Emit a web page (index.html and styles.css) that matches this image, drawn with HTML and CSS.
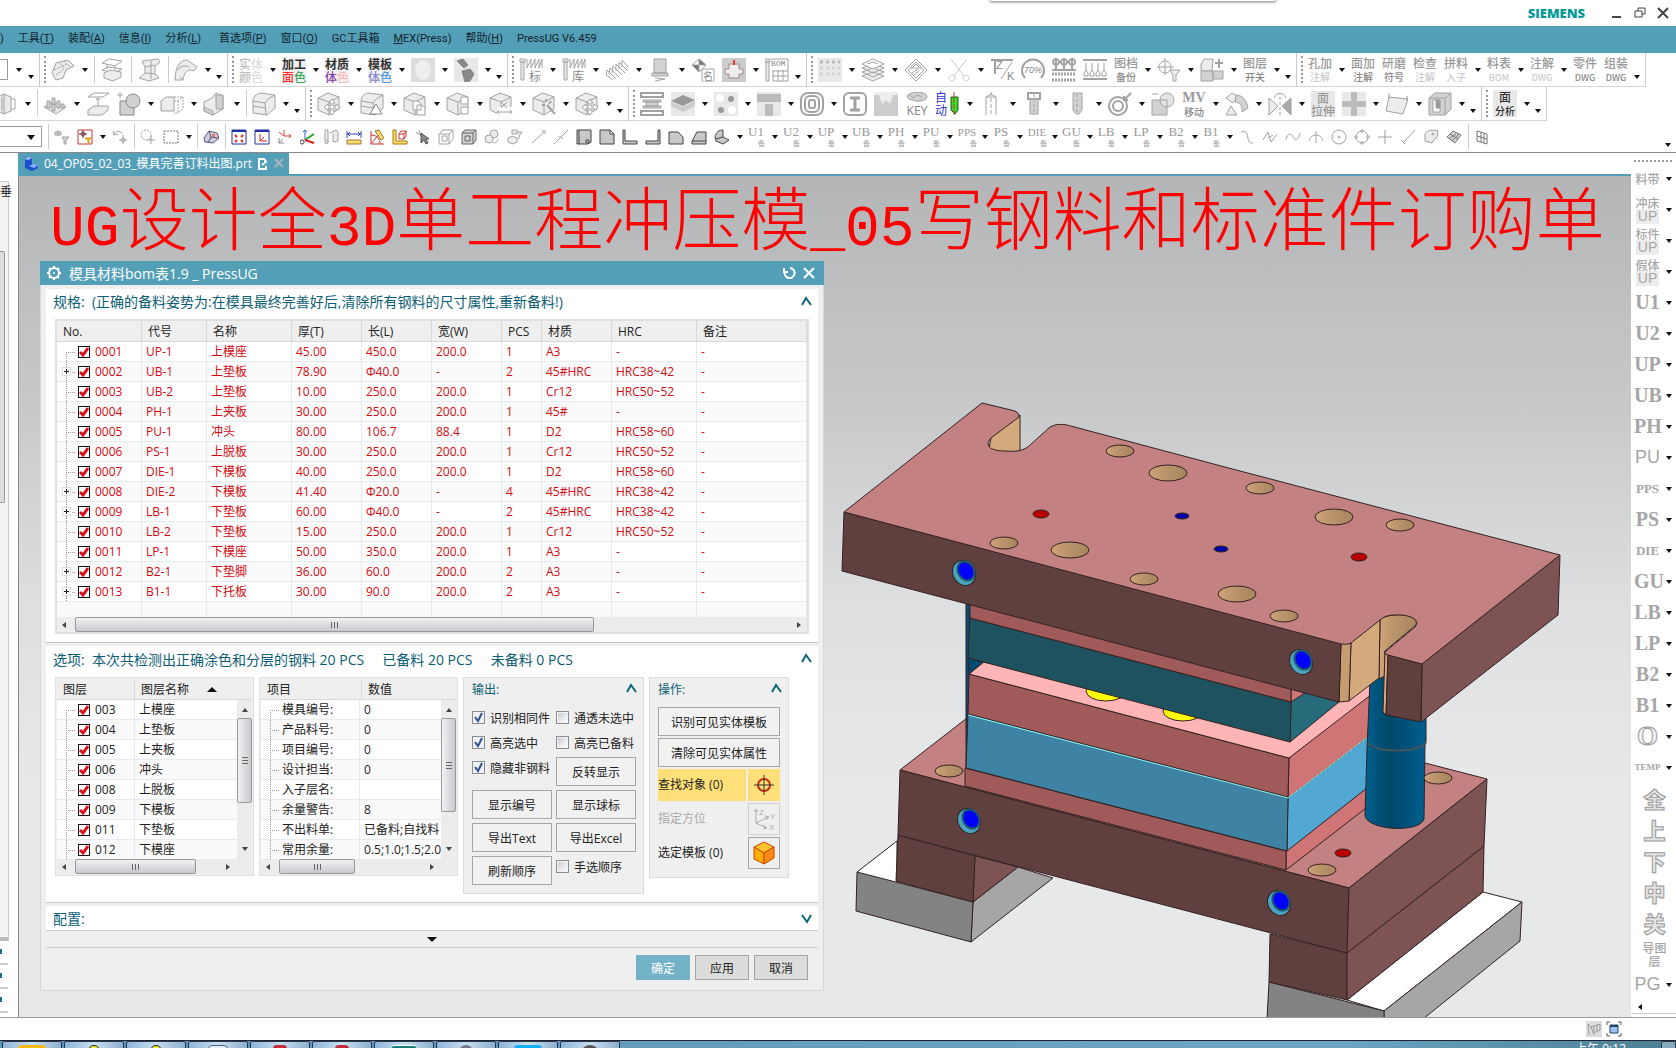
FILE: index.html
```
<!DOCTYPE html>
<html lang="zh-CN">
<head>
    <meta charset="UTF-8">
    <meta name="viewport" content="width=device-width, initial-scale=1.0">
    <title>04_OP05_02_03_模具完善订料出图.prt</title>
    <link rel="stylesheet" href="styles.css">
</head>
<body>

    <!-- icon sprite -->
    <svg class="sprite" width="0" height="0">
        <symbol id="sheet" viewBox="0 0 24 24"><path class="f" d="M1 15l4-10 12-3 6 6-8 4-3 8-7 2z"/><path d="M3 12l13-6M8 4l6 7M13 3l6 6M5 17l8-6" stroke-dasharray="2 1"/></symbol>
        <symbol id="swept" viewBox="0 0 24 24"><path d="M2 5l7-4 13 2-7 5zM2 12l6-3 14 2-8 4z"/><path class="f" d="M4 15l6-3 11 2v5l-8 4-9-3zM7 6v5M15 8v4"/></symbol>
        <symbol id="ruled" viewBox="0 0 24 24"><path class="f" d="M5 3l16-2 2 3-5 4v8l4 4-10 3-10-3 6-5V9z"/><path d="M8 9l10-2M8 15l10 1M14 3v18"/></symbol>
        <symbol id="bend" viewBox="0 0 24 24"><path class="f" d="M1 22C1 9 6 2 13 2l10 7-3 4c-7-3-10 2-11 9z"/><path d="M4 12c2-4 6-5 11-3M9 22l-3-3"/></symbol>
        <symbol id="blob" viewBox="0 0 24 24"><rect width="24" height="24" fill="#ddd" stroke="none"/><ellipse cx="12" cy="12" rx="8" ry="10" fill="#eee" stroke="none"/></symbol>
        <symbol id="hand" viewBox="0 0 24 24"><rect class="l" width="24" height="24"/><path d="M3 3l6-2 5 6-4 3zM8 13l8-2 4 5-4 7-5 1z" fill="#888" stroke="#888"/></symbol>
        <symbol id="stdpart" viewBox="0 0 24 24"><path class="f" d="M1 1h5v3H1zM2 4h3v18H2z"/><path d="M8 1v9l4-9v9l4-9v9l4-9v9l3-9v9"/></symbol>
        <symbol id="spring" viewBox="0 0 24 24"><path d="M1 17l7 5M2 12l9 9M5 10l9 9M8 8l9 9M11 6l9 9M14 4l9 9M17 2l6 7M1 17l1-5M4 16l1-6M7 15l1-7M11 13V6M14 11V4M17 9V2"/></symbol>
        <symbol id="punch" viewBox="0 0 24 24"><path class="g" d="M6 1h12v14H6zM4 15h16v3H4z"/><path d="M7 20l10 1-10 2"/></symbol>
        <symbol id="rename" viewBox="0 0 24 24"><path d="M8 1l7 6-7 7-7-7z"/><path d="M8 1l7 6H8zM8 14V7H1z" fill="#777"/><path fill="#fff" d="M11 11h12v12H11z"/></symbol>
        <symbol id="gift" viewBox="0 0 24 24"><rect width="24" height="24" fill="#ccc" stroke="none"/><path d="M7 6h10v5h4v5h-4v4H7v-4H3v-5h4z" fill="#eee" stroke="#a88"/><path d="M12 2v5M11 4h2" stroke="#e33" stroke-width="2"/></symbol>
        <symbol id="bom" viewBox="0 0 24 24"><path class="f" d="M0 1h5v3H0zM1 4h3v19H1z"/><path d="M6 1h17v22H8V12M8 13h15M8 18h15M13 12v11M18 12v11"/></symbol>
        <symbol id="plates" viewBox="0 0 24 24"><path class="l" d="M0 0h24v24H0z"/><path d="M2 4h20" stroke="#bbb" stroke-width="3" stroke-dasharray="3 3"/><path d="M2 10h20M2 16h20" stroke="#d4d4d4" stroke-width="3" stroke-dasharray="3 3"/></symbol>
        <symbol id="layers" viewBox="0 0 24 24"><path class="f" d="M1 18l11 5 11-5-11-4zM1 14l11 5 11-5-11-4zM1 10l11 5 11-5-11-4z"/><path fill="#fff" d="M1 6l11 5 11-5-11-5z"/><path d="M6 6l6-2 5 2"/></symbol>
        <symbol id="diamond" viewBox="0 0 24 24"><path d="M12 1l11 11-11 11L1 12zM12 4l8 8-8 8-8-8z"/><path d="M12 6l-5 5M12 6l5 5M9 10h6M8 15l6-4M10 17l5-4"/></symbol>
        <symbol id="cut" viewBox="0 0 24 24"><path stroke="#ccc" d="M4 1l13 17M20 1L7 18M5 17a3 3 0 1 0 .1 0zM19 17a3 3 0 1 0 .1 0z"/></symbol>
        <symbol id="zbar" viewBox="0 0 24 24"><path stroke-width="2" d="M1 2h22M5 2v14"/><path d="M22 4L11 21"/></symbol>
        <symbol id="dial" viewBox="0 0 24 24"><path stroke-width="2" d="M4 20a11 11 0 1 1 16 0"/></symbol>
        <symbol id="chain" viewBox="0 0 24 24"><path d="M4 1a3 3 0 1 0 .1 0zM12 1a3 3 0 1 0 .1 0zM20 1a3 3 0 1 0 .1 0zM4 0v12M12 0v12M20 0v12M0 12h24" stroke-width="2"/><path stroke-width="3" stroke-dasharray="2 1" d="M0 16h24M0 22h24"/></symbol>
        <symbol id="chain2" viewBox="0 0 24 24"><path d="M0 2h24M0 21h24" stroke-width="2"/><path d="M3 5v7l-2 3v3h4v-3l-2-3M9 5v7l-2 3v3h4v-3l-2-3M15 5v7l-2 3v3h4v-3l-2-3M21 5v7l-2 3v3h4v-3l-2-3"/></symbol>
        <symbol id="target" viewBox="0 0 24 24"><path d="M8 3a6 6 0 1 0 .1 0zM8 0v17M0 9h17"/><path class="f" d="M13 12h10l-4 5v6h-3v-6z"/></symbol>
        <symbol id="blocks" viewBox="0 0 24 24"><path class="f" d="M1 6l3-5h9l-1 12H1z"/><path class="g" d="M1 13h12v10H1zM13 13h10v8H13z"/><path d="M19 1v9M15 5h8" stroke-width="2"/></symbol>
        <symbol id="cyl" viewBox="0 0 24 24"><path class="f" d="M4 5l6-3 7 3v14l-7 3-6-3z"/><path d="M10 2v20M17 7h4v10h-4M8 5v14"/></symbol>
        <symbol id="pins" viewBox="0 0 24 24"><path class="f" d="M1 15l9-5 13 5-10 7z"/><path class="g" d="M4 9h3v7H4zM9 6h3v7H9zM9 12h3v7H9zM14 9h3v7h-3zM18 12h3v4h-3z"/></symbol>
        <symbol id="pad" viewBox="0 0 24 24"><path d="M2 5l6-4h15l-6 4zM12 6v9M10 8l2-2 2 2"/><path class="f" d="M2 18l6-4h14v4l-6 5H2z"/></symbol>
        <symbol id="unite" viewBox="0 0 24 24"><path class="g" stroke="#888" d="M3 9h14v14H3z"/><circle class="g" stroke="#888" cx="16" cy="9" r="7"/><path d="M3 0v6M0 3h6"/></symbol>
        <symbol id="trim" viewBox="0 0 24 24"><path class="f" d="M1 9l5-4h8v14H1z"/><path stroke-dasharray="2 1" d="M14 5h9v12l-5 4h-4M14 9h4l5-4M18 9v12"/></symbol>
        <symbol id="boss" viewBox="0 0 24 24"><path class="f" d="M1 10l8-4 4-5 7 3v13l-10 6-9-4z"/><path class="g" d="M13 3h7v14h-7zM1 15l9 4v4l-9-4z"/></symbol>
        <symbol id="edge" viewBox="0 0 24 24"><path class="f" d="M1 9c0-4 3-7 7-8l15 2v13l-8 7-14-2z"/><path d="M1 9l12 2c2-4 6-6 10-8M13 11l1 12M1 14l12 2"/></symbol>
        <symbol id="cube" viewBox="0 0 24 24"><path class="f" d="M1 6l10-5 11 4v12l-10 6-11-5z"/><path d="M1 6l11 4 10-5M12 10v13"/></symbol>
        <symbol id="a-move" viewBox="0 0 24 24"><path fill="#fff" d="M15 7l3 4h-2v3h3v-2l4 3-4 4v-3h-3v3h2l-3 4-3-4h2v-3h-3v3l-4-4 4-3v2h3v-3h-2z"/></symbol>
        <symbol id="a-tri" viewBox="0 0 24 24"><path fill="#fff" stroke="#888" d="M16 12l6 10H10z"/></symbol>
        <symbol id="a-doc" viewBox="0 0 24 24"><path fill="#fff" d="M10 9h5l3 3v6h-8zM14 13h5l3 3v7h-8z"/></symbol>
        <symbol id="a-two" viewBox="0 0 24 24"><path fill="#fff" d="M15 5h7v7h-7zM15 15h7v7h-7z"/></symbol>
        <symbol id="a-dim" viewBox="0 0 24 24"><path fill="#fff" stroke="none" d="M8 15h15v8H8z"/><path d="M12 10l6 6M18 10l-6 6M8 20h15M10 18l-2 2 2 2M21 18l2 2-2 2"/></symbol>
        <symbol id="a-wand" viewBox="0 0 24 24"><path stroke-width="2" d="M15 13l8 9M14 7v3M19 9l-2 3M10 13h3"/></symbol>
        <symbol id="die" viewBox="0 0 24 24"><path stroke-width="2" d="M1 1h22v4H1zM1 19h22v4H1z"/><path class="g" d="M3 8h18v2H3zM3 14h18v2H3zM6 10h12v4H6z"/></symbol>
        <symbol id="slab" viewBox="0 0 24 24"><path class="l" d="M0 0h24v24H0z"/><path d="M0 9l12-6 12 5-12 6z" fill="#999" stroke="none"/><path d="M0 10v4l12 6 12-6V9l-12 6z" fill="#ccc" stroke="none"/></symbol>
        <symbol id="holes" viewBox="0 0 24 24"><path class="l" d="M0 0h24v24H0z"/><g stroke="none"><circle cx="6" cy="6" r="4" fill="#fff"/><circle cx="17" cy="7" r="3" fill="#999"/><circle cx="7" cy="18" r="3" fill="#999"/><circle cx="18" cy="18" r="4" fill="#fff"/></g></symbol>
        <symbol id="tee" viewBox="0 0 24 24"><path class="l" d="M0 0h24v24H0z"/><path d="M0 2h24v8H0zM8 12h8v12H8z" fill="#bbb" stroke="none"/></symbol>
        <symbol id="ring" viewBox="0 0 24 24"><g stroke-width="2"><rect x="1" y="1" width="22" height="22" rx="7"/><rect x="5" y="4" width="14" height="16" rx="5"/><rect x="9" y="8" width="6" height="8" rx="2"/></g></symbol>
        <symbol id="ibeam" viewBox="0 0 24 24"><rect x="1" y="1" width="22" height="22" rx="5" stroke-width="2"/><path stroke-width="3" d="M7 6h10M12 6v12M7 18h10"/></symbol>
        <symbol id="valley" viewBox="0 0 24 24"><path d="M0 0h24v24H0z" fill="#ccc" stroke="none"/><path d="M0 3h5l3 9 4-4 4 4 3-9h5V0H0z" fill="#eee" stroke="none"/></symbol>
        <symbol id="key" viewBox="0 0 24 24"><path class="g" d="M2 5c0-6 20-7 20 0-1 6-17 5-20 0z"/><path d="M5 3l3 3 4-3 5 2"/></symbol>
        <symbol id="auto" viewBox="0 0 24 24"><path d="M15 5h7v13l-3 4-4-4z" fill="#3d2" stroke="#252"/><path d="M18 0v24" stroke="#d33" stroke-dasharray="5 1"/></symbol>
        <symbol id="sleeve" viewBox="0 0 24 24"><path d="M7 5v18M17 5v18M7 5l5-3 5 3z"/><path stroke-dasharray="4 2" d="M12 0v24"/></symbol>
        <symbol id="bolt" viewBox="0 0 24 24"><path d="M6 1h12v6H6z" stroke-width="2"/><path class="g" d="M8 7h8v15H8z"/><path stroke-dasharray="3 2" d="M12 2v20"/></symbol>
        <symbol id="pin" viewBox="0 0 24 24"><path class="g" d="M8 1h9v17l-3 4h-3l-3-4z"/><path stroke-dasharray="3 2" d="M12 2v20"/></symbol>
        <symbol id="locate" viewBox="0 0 24 24"><circle cx="10" cy="14" r="9" stroke-width="2"/><circle cx="10" cy="14" r="5" stroke-width="2"/><path d="M23 1l-7 7M16 4v4h4" stroke-width="2"/></symbol>
        <symbol id="sub" viewBox="0 0 24 24"><path class="g" d="M1 8h15v15H1z"/><circle cx="16" cy="8" r="7" fill="#e4e4e4"/><path d="M1 2h6M9 8h7v7"/></symbol>
        <symbol id="rotate" viewBox="0 0 24 24"><path class="f" d="M1 6l6-5 6 4-5 6zM6 14l6 9H1z"/><path class="g" d="M11 3c6 0 11 5 12 13l-6 4c1-7-3-10-7-10z"/></symbol>
        <symbol id="mirror" viewBox="0 0 24 24"><path class="f" d="M1 6l9 8-9 9z"/><path d="M23 6l-9 8 9 9z" fill="#aaa"/><path stroke-dasharray="3 2" d="M12 5v19"/><path d="M6 6c2-6 10-6 12 0"/></symbol>
        <symbol id="cross" viewBox="0 0 24 24"><path class="l" d="M0 0h24v24H0z"/><path d="M9 0h6v9h9v6h-9v9H9v-9H0V9h9z" fill="#bbb" stroke="none"/></symbol>
        <symbol id="warp" viewBox="0 0 24 24"><path class="f" d="M4 5l19 2-5 15L1 19z"/><path d="M4 1v6M22 4v5"/></symbol>
        <symbol id="pocket" viewBox="0 0 24 24"><path class="g" d="M1 6l6-5h16v16l-6 6H1z"/><path d="M1 6h16v17M17 6l6-5"/><path fill="#fff" d="M5 8h7v12H5z"/><path fill="#999" d="M8 8h4v8H8z"/></symbol>

        <symbol id="filter" viewBox="0 0 16 16"><path class="g" d="M1 3h6v3H1zM4 1v6M8 8h7l-3 3v4h-2v-4z"/></symbol>
        <symbol id="redfilter" viewBox="0 0 16 16"><path d="M1 1h14v14H1z" stroke="#c33"/><path d="M6 3a2 2 0 1 0 .1 0zM6 1v8M2 5h8" stroke="#633"/><path d="M8 9h6l-2 2v3h-1v-3z" fill="#fc3" stroke="#c90"/></symbol>
        <symbol id="undo" viewBox="0 0 16 16"><path d="M2 6c1-5 7-5 8-1M1 2l1 4 4-1M11 6v9M7 11h8M11 9a2 2 0 1 0 .1 0"/></symbol>
        <symbol id="pick" viewBox="0 0 16 16"><circle cx="6" cy="6" r="5" stroke-dasharray="2 1"/><path d="M11 7v8M7 11h8"/></symbol>
        <symbol id="rect" viewBox="0 0 16 16"><path stroke="#777" stroke-dasharray="2 1" d="M1 2h14v12H1z"/></symbol>
        <symbol id="solid" viewBox="0 0 16 16"><path d="M1 9l5-7 8 2 2 5-6 5-8-1z" fill="#ccd" stroke="#557"/><path d="M6 2l2 6 7 1M8 8l-3 6" stroke="#557"/><path d="M9 5h3v3H9z" fill="#e77" stroke="none"/></symbol>
        <symbol id="fitred" viewBox="0 0 16 16"><path d="M1 1h14v14H1z" fill="#fff" stroke="#23a"/><path d="M1 2h14" stroke="#23a" stroke-width="2"/><path d="M4 6l2 2M12 6l-2 2M4 13l2-2M12 13l-2-2" stroke="#d22" stroke-width="2"/></symbol>
        <symbol id="wcs" viewBox="0 0 16 16"><path d="M1 1h14v14H1z" fill="#fff" stroke="#23a"/><path d="M1 2h14" stroke="#23a" stroke-width="2"/><path d="M6 5v7h7M6 12l4-4" stroke="#d22"/></symbol>
        <symbol id="wcs2" viewBox="0 0 16 16"><path d="M7 1v6h7M7 7l-5-4M12 5l2 2-2 2" stroke="#d44"/><path d="M2 9v5h5M2 14l4-4" stroke="#888"/></symbol>
        <symbol id="csys" viewBox="0 0 16 16"><path d="M5 11V1M3 3l2-2 2 2" stroke="#36c"/><path d="M5 11l9-6" stroke="#2a2" stroke-width="2"/><path d="M5 11l9 3" stroke="#d22" stroke-width="2"/><path d="M2 11a2 2 0 1 0 .1 0z" stroke="#333"/></symbol>
        <symbol id="swap" viewBox="0 0 16 16"><path class="f" d="M2 1h3v11H2zM7 4l6-3 2 2v9l-5 1V5M1 13l3 2 2-3"/></symbol>
        <symbol id="dist" viewBox="0 0 16 16"><path d="M1 2v7M15 2v7M1 5h14M4 3L2 5l2 2M12 3l2 2-2 2" stroke="#34a"/><path d="M1 11h14v4H1z" fill="#fd6" stroke="#974"/></symbol>
        <symbol id="angle" viewBox="0 0 16 16"><path d="M2 2v13h13M2 6c6 0 9 4 9 9M2 15L10 5" stroke="#c33"/><path d="M6 2l4-1 5 8-3 2z" fill="#fd6" stroke="#974"/></symbol>
        <symbol id="measure" viewBox="0 0 16 16"><path d="M1 1h3v11h11v3H1z" fill="#fd6" stroke="#a71"/><path d="M7 5h5v5H7zM9 2h5v5M7 5l2-3M12 5l2-3M12 10l2-3" stroke="#c33"/></symbol>
        <symbol id="cursor" viewBox="0 0 16 16"><path d="M1 3l7 5M4 1l2 6" /><path d="M6 4v10l3-3 2 4 2-1-2-4h3z" fill="#888" stroke="#555"/></symbol>
        <symbol id="wire" viewBox="0 0 16 16"><path d="M1 5l4-4h10v9l-4 5H1zM1 5h10v10M11 5l4-4M4 7h5v5H4z"/></symbol>
        <symbol id="wired" viewBox="0 0 16 16"><path class="g" stroke="#666" d="M1 4l3-3h11v10l-3 4H1zM1 4h11v11M12 4l3-3M4 7h5v5H4z"/></symbol>
        <symbol id="gears" viewBox="0 0 16 16"><circle class="f" cx="10" cy="5" r="4"/><circle class="f" cx="5" cy="10" r="4"/><path d="M9 14c3 0 5-2 5-4"/></symbol>
        <symbol id="clone" viewBox="0 0 16 16"><path class="f" d="M1 9l4-2 5 2v4l-4 2-5-2zM5 1h5v4H5zM10 3h5l-3 4v3"/></symbol>
        <symbol id="line" viewBox="0 0 16 16"><path d="M2 14L14 3M12 2h3v3"/></symbol>
        <symbol id="line2" viewBox="0 0 16 16"><path d="M1 15L15 1M6 7l4 3"/></symbol>
        <symbol id="b1" viewBox="0 0 16 16"><path class="d" d="M1 1h14v12l-3 2H1z"/><path stroke="#444" d="M3 1v14M10 11h3v3h-3z"/></symbol>
        <symbol id="b2" viewBox="0 0 16 16"><path class="d" d="M1 1h10l4 4v10H1zM11 1v4h4"/></symbol>
        <symbol id="b3" viewBox="0 0 16 16"><path class="d" d="M1 1h2v11h12v3H1z"/></symbol>
        <symbol id="b4" viewBox="0 0 16 16"><path class="d" d="M15 1h-2v11H1v3h14z"/></symbol>
        <symbol id="b5" viewBox="0 0 16 16"><path class="d" d="M1 3h9l5 5v7H1z"/></symbol>
        <symbol id="b6" viewBox="0 0 16 16"><path class="d" d="M1 12l5-9h9v12H1zM1 12h14"/></symbol>
        <symbol id="b7" viewBox="0 0 16 16"><path class="d" d="M1 8c1-5 4-7 8-7v7l6 3-6 4-7-3zM9 8l-7 2"/></symbol>
        <symbol id="c1" viewBox="0 0 16 16"><path d="M2 3c9-2 5 5 8 9 1 2 2 2 4 2"/></symbol>
        <symbol id="c2" viewBox="0 0 16 16"><path d="M1 11l5-8 3 10 6-8M6 9l5-3"/></symbol>
        <symbol id="c3" viewBox="0 0 16 16"><path d="M1 11c2-9 6-6 7-3s5 5 7-4"/></symbol>
        <symbol id="c4" viewBox="0 0 16 16"><path d="M1 12c2-8 12-8 14 0M8 2v12"/></symbol>
        <symbol id="c5" viewBox="0 0 16 16"><circle cx="8" cy="8" r="7"/><circle cx="8" cy="8" r="1"/></symbol>
        <symbol id="c6" viewBox="0 0 16 16"><circle cx="8" cy="8" r="6"/><path d="M7 1h2v2H7zM7 13h2v2H7zM1 7h2v2H1zM13 7h2v2h-2z" fill="#fff"/></symbol>
        <symbol id="c7" viewBox="0 0 16 16"><path d="M8 1v14M1 8h14"/></symbol>
        <symbol id="c8" viewBox="0 0 16 16"><path d="M15 1L3 14M1 11l4 4"/></symbol>
        <symbol id="c9" viewBox="0 0 16 16"><path class="f" d="M2 5c3-5 9-4 13-3l-1 7c-3 0-4 3-5 5L2 12z"/><circle cx="10" cy="5" r="1"/></symbol>
        <symbol id="c10" viewBox="0 0 16 16"><path class="g" stroke="#777" d="M1 8l6-6 8 4-6 8zM4 5l8 5M3 10l7-5M6 12l7-7"/></symbol>
        <symbol id="c11" viewBox="0 0 16 16"><path stroke="#777" d="M3 2l10 3v10L3 12zM3 7l10 3M7 3v10M10 4v10"/></symbol>
    </svg>

    <header class="titlebar">
        <div class="peek"></div>
        <strong>SIEMENS</strong>
        <button aria-label="最小化"><svg width="12" height="12"><path d="M1 10h9" stroke-width="2"/></svg></button>
        <button aria-label="还原"><svg width="12" height="12"><path d="M4 4V1h7v6H8M1 4h7v6H1z"/></svg></button>
        <button aria-label="关闭"><svg width="12" height="12"><path d="M1 1l10 10M11 1L1 11" stroke-width="2"/></svg></button>
    </header>

    <nav class="menubar">
        <a href="#">)</a>
        <a href="#">工具(<u>T</u>)</a>
        <a href="#">装配(<u>A</u>)</a>
        <a href="#">信息(<u>I</u>)</a>
        <a href="#" class="wide">分析(<u>L</u>)</a>
        <a href="#">首选项(<u>P</u>)</a>
        <a href="#">窗口(<u>O</u>)</a>
        <a href="#">GC工具箱</a>
        <a href="#"><u>M</u>EX(Press)</a>
        <a href="#">帮助(<u>H</u>)</a>
        <a href="#">PressUG V6.459</a>
    </nav>

    <div class="toolbar">
        <div class="bar stub">
            <button class="combo" aria-label="样式"></button><button class="more" aria-label="更多"></button>
        </div>
        <div class="bar grip">
            <button class="tool drop"><svg><use href="#sheet"/></svg></button><i class="sep"></i>
            <button class="tool"><svg><use href="#swept"/></svg></button><i class="sep"></i>
            <button class="tool"><svg><use href="#ruled"/></svg></button><i class="sep"></i>
            <button class="tool drop"><svg><use href="#bend"/></svg></button>
            <button class="more" aria-label="更多"></button>
        </div>
        <div class="bar grip">
            <button class="tool drop"><span class="pale">实<em>体</em><br>颜<em>色</em></span></button>
            <button class="tool drop"><span class="ink">加工<br><em class="red">面</em><em class="green">色</em></span></button>
            <button class="tool drop"><span class="ink">材质<br><em class="purple">体</em><em class="pink">色</em></span></button>
            <button class="tool drop"><span class="ink">模板<br><em class="violet">体</em><em class="blue">色</em></span></button>
            <button class="tool drop"><svg><use href="#blob"/></svg></button>
            <button class="tool drop"><svg><use href="#hand"/></svg></button>
            <button class="more" aria-label="更多"></button>
        </div>
        <div class="bar grip">
            <button class="tool drop over"><svg><use href="#stdpart"/></svg><small>标</small></button>
            <button class="tool drop over"><svg><use href="#stdpart"/></svg><small>库</small></button>
            <button class="tool drop"><svg><use href="#spring"/></svg></button>
            <button class="tool drop"><svg><use href="#punch"/></svg></button>
            <button class="tool over name"><svg><use href="#rename"/></svg><small>名</small></button>
            <button class="tool drop"><svg><use href="#gift"/></svg></button>
            <button class="tool over top"><svg><use href="#bom"/></svg><small>BOM</small></button>
            <button class="more" aria-label="更多"></button>
        </div>
        <div class="bar grip">
            <button class="tool drop"><svg><use href="#plates"/></svg></button>
            <button class="tool drop"><svg><use href="#layers"/></svg></button>
            <button class="tool drop"><svg><use href="#diamond"/></svg></button>
            <button class="tool drop"><svg><use href="#cut"/></svg></button>
            <button class="tool over zk"><svg><use href="#zbar"/></svg><small>Z</small><small>K</small></button>
            <button class="tool over percent"><svg><use href="#dial"/></svg><small>70%</small></button>
            <button class="tool"><svg><use href="#chain"/></svg></button>
            <button class="tool"><svg><use href="#chain2"/></svg></button>
            <button class="tool drop"><span>图档<br><small>备份</small></span></button>
            <button class="tool drop"><svg><use href="#target"/></svg></button>
            <button class="tool drop"><svg><use href="#blocks"/></svg></button>
            <button class="tool drop"><span>图层<br><small>开关</small></span></button>
            <button class="more" aria-label="更多"></button>
        </div>
        <div class="bar grip last">
            <button class="tool drop"><span>孔加<br><small class="faint">注解</small></span></button>
            <button class="tool"><span>面加<br><small>注解</small></span></button>
            <button class="tool"><span>研磨<br><small>符号</small></span></button>
            <button class="tool"><span>检查<br><small class="faint">注解</small></span></button>
            <button class="tool drop"><span>拼料<br><small class="faint">入子</small></span></button>
            <button class="tool drop"><span>料表<br><small class="faint tiny">BOM</small></span></button>
            <button class="tool drop"><span>注解<br><small class="faint tiny">DWG</small></span></button>
            <button class="tool"><span>零件<br><small class="tiny">DWG</small></span></button>
            <button class="tool"><span>组装<br><small class="tiny">DWG</small></span></button>
            <button class="more" aria-label="更多"></button>
        </div>
    </div>

    <div class="toolbar">
        <div class="bar shifted">
            <button class="tool drop"><svg><use href="#cyl"/></svg></button><i class="sep"></i>
            <button class="tool drop"><svg><use href="#pins"/></svg></button>
            <button class="tool"><svg><use href="#pad"/></svg></button>
            <button class="tool drop"><svg><use href="#unite"/></svg></button>
            <button class="tool drop"><svg><use href="#trim"/></svg></button>
            <button class="tool drop"><svg><use href="#boss"/></svg></button><i class="sep"></i>
            <button class="tool drop"><svg><use href="#edge"/></svg></button>
            <button class="more" aria-label="更多"></button>
        </div>
        <div class="bar grip">
            <button class="tool drop"><svg><use href="#cube"/><use href="#a-move"/></svg></button>
            <button class="tool drop"><svg><use href="#edge"/><use href="#a-tri"/></svg></button>
            <button class="tool drop"><svg><use href="#cube"/><use href="#a-doc"/></svg></button>
            <button class="tool drop"><svg><use href="#cube"/><use href="#a-two"/></svg></button>
            <button class="tool drop"><svg><use href="#cube"/><use href="#a-dim"/></svg></button>
            <button class="tool drop"><svg><use href="#cube"/><use href="#a-wand"/></svg></button>
            <button class="tool drop"><svg><use href="#cube"/><use href="#a-move"/></svg></button>
            <button class="more" aria-label="更多"></button>
        </div>
        <div class="bar grip">
            <button class="tool"><svg><use href="#die"/></svg></button>
            <button class="tool drop"><svg><use href="#slab"/></svg></button>
            <button class="tool drop"><svg><use href="#holes"/></svg></button>
            <button class="tool drop"><svg><use href="#tee"/></svg></button>
            <button class="tool drop"><svg><use href="#ring"/></svg></button>
            <button class="tool"><svg><use href="#ibeam"/></svg></button>
            <button class="tool"><svg><use href="#valley"/></svg></button>
            <button class="tool over keys"><svg><use href="#key"/></svg><small>KEY</small></button>
            <button class="tool drop over auto"><svg><use href="#auto"/></svg><small>自<br>动</small></button>
            <button class="tool drop"><svg><use href="#sleeve"/></svg></button>
            <button class="tool drop"><svg><use href="#bolt"/></svg></button>
            <button class="tool drop"><svg><use href="#pin"/></svg></button>
            <button class="tool drop"><svg><use href="#locate"/></svg></button>
            <button class="tool"><svg><use href="#sub"/></svg></button>
            <button class="tool drop"><span><b class="mv">MV</b><br><small>移动</small></span></button>
            <button class="tool drop"><svg><use href="#rotate"/></svg></button>
            <button class="tool drop"><svg><use href="#mirror"/></svg></button>
            <button class="tool"><span class="box">面<br>拉伸</span></button>
            <button class="tool drop"><svg><use href="#cross"/></svg></button>
            <button class="tool drop"><svg><use href="#warp"/></svg></button>
            <button class="tool drop"><svg><use href="#pocket"/></svg></button>
            <button class="more" aria-label="更多"></button>
        </div>
        <div class="bar grip last">
            <button class="tool drop"><span class="box black">面<br><small>分析</small></span></button>
            <button class="more" aria-label="更多"></button>
        </div>
    </div>

    <div class="toolbar small">
        <button class="combo" aria-label="选择过滤器"></button><i class="sep"></i>
        <button class="tool"><svg><use href="#filter"/></svg></button>
        <button class="tool drop"><svg><use href="#redfilter"/></svg></button>
        <button class="tool"><svg><use href="#undo"/></svg></button><i class="sep"></i>
        <button class="tool"><svg><use href="#pick"/></svg></button>
        <button class="tool drop"><svg><use href="#rect"/></svg></button><i class="sep"></i>
        <button class="tool"><svg><use href="#solid"/></svg></button><i class="sep"></i>
        <button class="tool"><svg><use href="#fitred"/></svg></button>
        <button class="tool"><svg><use href="#wcs"/></svg></button>
        <button class="tool"><svg><use href="#wcs2"/></svg></button>
        <button class="tool"><svg><use href="#csys"/></svg></button>
        <button class="tool"><svg><use href="#swap"/></svg></button>
        <button class="tool"><svg><use href="#dist"/></svg></button>
        <button class="tool"><svg><use href="#angle"/></svg></button>
        <button class="tool"><svg><use href="#measure"/></svg></button>
        <button class="tool"><svg><use href="#cursor"/></svg></button>
        <button class="tool"><svg><use href="#wire"/></svg></button>
        <button class="tool"><svg><use href="#wired"/></svg></button>
        <button class="tool"><svg><use href="#gears"/></svg></button>
        <button class="tool"><svg><use href="#clone"/></svg></button>
        <button class="tool"><svg><use href="#line"/></svg></button>
        <button class="tool"><svg><use href="#line2"/></svg></button>
        <button class="tool"><svg><use href="#b1"/></svg></button>
        <button class="tool"><svg><use href="#b2"/></svg></button>
        <button class="tool"><svg><use href="#b3"/></svg></button>
        <button class="tool"><svg><use href="#b4"/></svg></button>
        <button class="tool"><svg><use href="#b5"/></svg></button>
        <button class="tool"><svg><use href="#b6"/></svg></button>
        <button class="tool drop"><svg><use href="#b7"/></svg></button>
        <button class="tool drop code"><span>U1<small>备</small></span></button>
        <button class="tool drop code"><span>U2<small>备</small></span></button>
        <button class="tool drop code"><span>UP<small>备</small></span></button>
        <button class="tool drop code"><span>UB<small>备</small></span></button>
        <button class="tool drop code"><span>PH<small>备</small></span></button>
        <button class="tool drop code"><span>PU<small>备</small></span></button>
        <button class="tool drop code long"><span>PPS<small>备</small></span></button>
        <button class="tool drop code"><span>PS<small>备</small></span></button>
        <button class="tool drop code long"><span>DIE<small>备</small></span></button>
        <button class="tool drop code"><span>GU<small>备</small></span></button>
        <button class="tool drop code"><span>LB<small>备</small></span></button>
        <button class="tool drop code"><span>LP<small>备</small></span></button>
        <button class="tool drop code"><span>B2<small>备</small></span></button>
        <button class="tool drop code"><span>B1<small>备</small></span></button>
        <button class="tool"><svg><use href="#c1"/></svg></button>
        <button class="tool"><svg><use href="#c2"/></svg></button>
        <button class="tool"><svg><use href="#c3"/></svg></button>
        <button class="tool"><svg><use href="#c4"/></svg></button>
        <button class="tool"><svg><use href="#c5"/></svg></button>
        <button class="tool"><svg><use href="#c6"/></svg></button>
        <button class="tool"><svg><use href="#c7"/></svg></button>
        <button class="tool"><svg><use href="#c8"/></svg></button>
        <button class="tool"><svg><use href="#c9"/></svg></button>
        <button class="tool"><svg><use href="#c10"/></svg></button><i class="sep"></i>
        <button class="tool"><svg><use href="#c11"/></svg></button>
        <button class="more end" aria-label="更多"></button>
    </div>

    <div class="workspace">
        <aside class="resource">
            <div class="pane"><span>垂</span><i class="thumb"></i></div>
            <i class="fold"></i><i class="fold"></i><i class="fold"></i>
        </aside>

        <main>
            <div class="tabs">
                <div class="tab">
                    <svg width="16" height="16"><path d="M2 3l4-2 3 1v6l5 1 1 3-6 3-7-3z" fill="#1c4fd0"/><path d="M2 3l4-2 3 1-4 2z" fill="#a8c6ff"/><path d="M6 10l4-2 5 1-4 3z" fill="#8db2ff"/></svg>
                    <span>04_OP05_02_03_模具完善订料出图.prt</span>
                    <svg width="12" height="12"><path d="M8 1H2v10h7V8M8 1v3h2M5 7l5-4" fill="none" stroke="#fff" stroke-width="2"/></svg>
                    <button aria-label="关闭标签"><svg width="10" height="10"><path d="M1 1l8 8M9 1L1 9" stroke="#a9b3b8" stroke-width="2"/></svg></button>
                </div>
            </div>

            <div class="viewport">
                <h1><span>UG</span>设计全<span>3D</span>单工程冲压模<span>_05</span>写钢料和标准件订购单</h1>

                <!-- die set, drawn back to front -->
                <svg class="model" viewBox="830 376 740 641">
                    <defs>
                        <linearGradient id="tan"><stop offset="0" stop-color="#d0a578"/><stop offset=".4" stop-color="#ba946b"/><stop offset="1" stop-color="#a88660"/></linearGradient>
                        <linearGradient id="post"><stop offset="0" stop-color="#00608f"/><stop offset=".4" stop-color="#004768"/><stop offset="1" stop-color="#005f90"/></linearGradient>
                    </defs>
                    <g class="edges">
                        <path fill="#fff" d="M857 872l40-31v61z"/>
                        <path fill="#a6a6a6" d="M973 902l45-35 35 11-82 64z"/>
                        <path fill="#838383" d="M857 872l116 30-2 40-115-31z"/>
                        <path fill="#7d5353" d="M975 856l43 11-45 35z"/>
                        <path fill="#603f3f" d="M898 835l77 21-2 46-77-21z"/>
                        <path fill="#fff" d="M1347 1000l136-108 39 10-138 109z"/>
                        <path fill="#a6a6a6" d="M1384 1011l138-109-2 39-97 78h-39z"/>
                        <path fill="#838383" d="M1269 982l115 29v8h-117z"/>
                        <path fill="#c38181" d="M900 770l67-52 458 45 62 16-138 109z"/>
                        <path fill="#603f3f" d="M1270 934l77 19v47l-78-18z"/>
                        <path fill="#7d5353" d="M1347 953l137-107-1 46-136 108z"/>
                        <path fill="#603f3f" d="M900 770l449 118-2 65-449-118z"/>
                        <path fill="#7d5353" d="M1349 888l138-109-3 67-137 107z"/>
                        <path fill="#0a4a78" d="M966 604h4v164h-4z"/>
                        <path fill="#d07575" d="M1286 851l84-66v20l-84 65z"/>
                        <path fill="#a05a5a" d="M965 768l321 83v19l-321-84z"/>
                        <path fill="#52a8d3" d="M1288 798l84-64v50l-85 67z"/>
                        <path fill="#3f83a4" d="M968 714l320 84-1 53-321-83z"/>
                        <path fill="#d07575" d="M1289 758l83-66v42l-84 64z"/>
                        <path fill="#a05a5a" d="M969 674l320 84-1 39-320-83z"/>
                        <path stroke="#8ff" fill="none" d="M968 715l320 83 80-61"/>
                        <path fill="#ffb5b5" d="M969 674l15-12 306 60 49-30 36-8-3 10-83 64z"/>
                        <ellipse fill="#ff0" cx="1106" cy="691" rx="20" ry="10"/>
                        <ellipse fill="#ff0" cx="1183" cy="711" rx="20" ry="10"/>
                        <path fill="#004b74" d="M968 658l15 4-14 12z"/>
                        <path fill="#266b7a" d="M1291 702l11-11 37 11-49 40z"/>
                        <path fill="#1e525f" d="M970 618l321 84-1 40-322-84z"/>
                        <path fill="#d07575" d="M1291 688l14 5-14 9z"/>
                        <path fill="#a05a5a" d="M970 604l321 82v16l-321-84z"/>

                        <path fill="url(#post)" d="M1370 680l15-10 41 40v32l-1 2-1 75c-4 14-55 12-59-3l2-68z"/>
                        <path fill="none" stroke="#42555a" stroke-width="2" d="M1368 743c10 10 47 10 58 0"/>

                        <path fill="#d4aa7c" d="M991 437l29-22v36l-16 3-15-5z"/>
                        <path fill="#7d5353" d="M1422 664l138-109-2 60-137 107z"/>
                        <path fill="url(#tan)" d="M1380 619c15-8 40-4 36 6l-31 26v25l-6 3z"/>
                        <path fill="#d4aa7c" d="M1351 642l29-23-1 59-30 23z"/>
                        <path fill="#c69d70" d="M1341 643l10-1-2 59-10 1z"/>
                        <path fill="#d4aa7c" d="M1385 651l3 4-2 60-3-3z"/>
                        <path fill="#603f3f" d="M1388 655l34 9-1 58-35-7z"/>
                        <path fill="#603f3f" d="M844 512l497 131-2 59-497-131z"/>
                        <path fill="#c38181" d="M844 512L982 403l33 8q5 2 4 6l-28 21c-8 9 2 13 14 13 10 1 18 0 24-5l21-19q7-4 17-2l173 46 320 84-138 109-34-9q-5-1-2-4l29-24c6-7-5-13-20-12-8 0-11 2-15 5l-29 23q-4 2-10 1z"/>

                        <g fill="url(#tan)">
                            <ellipse cx="1120" cy="451" rx="14" ry="6"/><ellipse cx="1168" cy="473" rx="19" ry="8"/>
                            <ellipse cx="1260" cy="488" rx="14" ry="6"/><ellipse cx="1334" cy="517" rx="19" ry="8"/>
                            <ellipse cx="1400" cy="525" rx="14" ry="6"/><ellipse cx="1004" cy="543" rx="14" ry="6"/>
                            <ellipse cx="1070" cy="550" rx="19" ry="8"/><ellipse cx="1144" cy="579" rx="14" ry="6"/>
                            <ellipse cx="1237" cy="594" rx="19" ry="8"/><ellipse cx="1284" cy="616" rx="14" ry="6"/>
                            <ellipse cx="949" cy="771" rx="14" ry="6"/><ellipse cx="1438" cy="778" rx="14" ry="6"/>
                            <ellipse cx="1322" cy="870" rx="14" ry="6"/>
                        </g>
                        <g fill="#b80000">
                            <ellipse cx="1041" cy="514" rx="8" ry="4"/><ellipse cx="1359" cy="557" rx="8" ry="4"/>
                            <ellipse cx="1343" cy="853" rx="8" ry="4"/>
                        </g>
                        <g fill="#0000a8"><ellipse cx="1182" cy="516" rx="7" ry="3"/><ellipse cx="1221" cy="549" rx="7" ry="3"/></g>
                        <g fill="#4ba3bd">
                            <ellipse cx="964" cy="573" rx="11" ry="13" transform="rotate(-30 964 573)"/>
                            <ellipse cx="1301" cy="662" rx="11" ry="13" transform="rotate(-30 1301 662)"/>
                            <ellipse cx="969" cy="821" rx="11" ry="13" transform="rotate(-30 969 821)"/>
                            <ellipse cx="1279" cy="903" rx="11" ry="13" transform="rotate(-30 1279 903)"/>
                        </g>
                        <g fill="#00f" stroke="#1d5a6a" stroke-width="2">
                            <ellipse cx="966" cy="571" rx="8" ry="10" transform="rotate(-30 966 571)"/>
                            <ellipse cx="1303" cy="660" rx="8" ry="10" transform="rotate(-30 1303 660)"/>
                            <ellipse cx="971" cy="819" rx="8" ry="10" transform="rotate(-30 971 819)"/>
                            <ellipse cx="1281" cy="901" rx="8" ry="10" transform="rotate(-30 1281 901)"/>
                        </g>
                    </g>
                </svg>

                <section class="dialog" role="dialog" aria-labelledby="dlgTitle">
                    <header>
                        <svg width="16" height="16" viewBox="0 0 16 16"><circle cx="8" cy="8" r="5" fill="none" stroke="#fff" stroke-width="2"/><circle cx="8" cy="8" r="1" fill="#fff"/><path d="M8 1v2M8 13v2M1 8h2M13 8h2M3 3l2 2M11 11l2 2M13 3l-2 2M3 13l2-2" stroke="#fff" stroke-width="2"/></svg>
                        <h2 id="dlgTitle">模具材料bom表1.9 _ PressUG</h2>
                        <button aria-label="重置"><svg width="14" height="14"><path d="M8 2a5 5 0 1 1-5 3M2 2v4h4" fill="none" stroke="#fff" stroke-width="2"/></svg></button>
                        <button aria-label="关闭"><svg width="12" height="12"><path d="M1 1l10 10M11 1L1 11" stroke="#fff" stroke-width="2"/></svg></button>
                    </header>

                    <div class="panel">
                        <h3>规格: &nbsp;(正确的备料姿势为:在模具最终完善好后,清除所有钢料的尺寸属性,重新备料!)<button class="chev" aria-label="收起"></button></h3>
                        <div class="list">
                            <table class="bom">
                                <colgroup><col class="w85"><col class="w65"><col class="w85"><col class="w70"><col class="w70"><col class="w70"><col class="w40"><col class="w70"><col class="w85"><col></colgroup>
                                <thead>
                                    <tr><th>No.</th><th>代号</th><th>名称</th><th>厚(T)</th><th>长(L)</th><th>宽(W)</th><th>PCS</th><th>材质</th><th>HRC</th><th>备注</th></tr>
                                </thead>
                                <tbody>
                                    <tr><td><label class="node"><i></i><input type="checkbox" checked>0001</label></td><td>UP-1</td><td>上模座</td><td>45.00</td><td>450.0</td><td>200.0</td><td>1</td><td>A3</td><td>-</td><td>-</td></tr>
                                    <tr><td><label class="node plus"><i></i><input type="checkbox" checked>0002</label></td><td>UB-1</td><td>上垫板</td><td>78.90</td><td>Φ40.0</td><td>-</td><td>2</td><td>45#HRC</td><td>HRC38~42</td><td>-</td></tr>
                                    <tr><td><label class="node"><i></i><input type="checkbox" checked>0003</label></td><td>UB-2</td><td>上垫板</td><td>10.00</td><td>250.0</td><td>200.0</td><td>1</td><td>Cr12</td><td>HRC50~52</td><td>-</td></tr>
                                    <tr><td><label class="node"><i></i><input type="checkbox" checked>0004</label></td><td>PH-1</td><td>上夹板</td><td>30.00</td><td>250.0</td><td>200.0</td><td>1</td><td>45#</td><td>-</td><td>-</td></tr>
                                    <tr><td><label class="node"><i></i><input type="checkbox" checked>0005</label></td><td>PU-1</td><td>冲头</td><td>80.00</td><td>106.7</td><td>88.4</td><td>1</td><td>D2</td><td>HRC58~60</td><td>-</td></tr>
                                    <tr><td><label class="node"><i></i><input type="checkbox" checked>0006</label></td><td>PS-1</td><td>上脱板</td><td>30.00</td><td>250.0</td><td>200.0</td><td>1</td><td>Cr12</td><td>HRC50~52</td><td>-</td></tr>
                                    <tr><td><label class="node"><i></i><input type="checkbox" checked>0007</label></td><td>DIE-1</td><td>下模板</td><td>40.00</td><td>250.0</td><td>200.0</td><td>1</td><td>D2</td><td>HRC58~60</td><td>-</td></tr>
                                    <tr><td><label class="node plus"><i></i><input type="checkbox" checked>0008</label></td><td>DIE-2</td><td>下模板</td><td>41.40</td><td>Φ20.0</td><td>-</td><td>4</td><td>45#HRC</td><td>HRC38~42</td><td>-</td></tr>
                                    <tr><td><label class="node plus"><i></i><input type="checkbox" checked>0009</label></td><td>LB-1</td><td>下垫板</td><td>60.00</td><td>Φ40.0</td><td>-</td><td>2</td><td>45#HRC</td><td>HRC38~42</td><td>-</td></tr>
                                    <tr><td><label class="node"><i></i><input type="checkbox" checked>0010</label></td><td>LB-2</td><td>下垫板</td><td>15.00</td><td>250.0</td><td>200.0</td><td>1</td><td>Cr12</td><td>HRC50~52</td><td>-</td></tr>
                                    <tr><td><label class="node"><i></i><input type="checkbox" checked>0011</label></td><td>LP-1</td><td>下模座</td><td>50.00</td><td>350.0</td><td>200.0</td><td>1</td><td>A3</td><td>-</td><td>-</td></tr>
                                    <tr><td><label class="node plus"><i></i><input type="checkbox" checked>0012</label></td><td>B2-1</td><td>下垫脚</td><td>36.00</td><td>60.0</td><td>200.0</td><td>2</td><td>A3</td><td>-</td><td>-</td></tr>
                                    <tr><td><label class="node plus"><i></i><input type="checkbox" checked>0013</label></td><td>B1-1</td><td>下托板</td><td>30.00</td><td>90.0</td><td>200.0</td><td>2</td><td>A3</td><td>-</td><td>-</td></tr>
                                    <tr class="blank"><td></td><td></td><td></td><td></td><td></td><td></td><td></td><td></td><td></td><td></td></tr>
                                </tbody>
                            </table>
                            <div class="hscroll"><i class="long"></i></div>
                        </div>
                    </div>

                    <div class="panel options">
                        <h3>选项: &nbsp;本次共检测出正确涂色和分层的钢料 20 PCS &nbsp; &nbsp; 已备料 20 PCS &nbsp; &nbsp; 未备料 0 PCS<button class="chev" aria-label="收起"></button></h3>
                        <div class="columns">
                            <div class="list short">
                                <table class="layers">
                                    <thead><tr><th>图层</th><th class="sorted">图层名称</th></tr></thead>
                                </table>
                                <div class="scroller">
                                    <table class="layers">
                                        <tbody>
                                            <tr><td><label class="node"><i></i><input type="checkbox" checked>003</label></td><td>上模座</td></tr>
                                            <tr><td><label class="node"><i></i><input type="checkbox" checked>004</label></td><td>上垫板</td></tr>
                                            <tr><td><label class="node"><i></i><input type="checkbox" checked>005</label></td><td>上夹板</td></tr>
                                            <tr><td><label class="node"><i></i><input type="checkbox" checked>006</label></td><td>冲头</td></tr>
                                            <tr><td><label class="node"><i></i><input type="checkbox" checked>008</label></td><td>上脱板</td></tr>
                                            <tr><td><label class="node"><i></i><input type="checkbox" checked>009</label></td><td>下模板</td></tr>
                                            <tr><td><label class="node"><i></i><input type="checkbox" checked>011</label></td><td>下垫板</td></tr>
                                            <tr><td><label class="node"><i></i><input type="checkbox" checked>012</label></td><td>下模座</td></tr>
                                        </tbody>
                                    </table>
                                    <div class="vscroll"><i></i></div>
                                </div>
                                <div class="hscroll inset"><i></i></div>
                            </div>

                            <div class="list short">
                                <table class="props">
                                    <thead><tr><th>项目</th><th>数值</th></tr></thead>
                                </table>
                                <div class="scroller">
                                    <table class="props">
                                        <tbody>
                                            <tr><td><span class="node"><i></i>模具编号:</span></td><td>0</td></tr>
                                            <tr><td><span class="node"><i></i>产品料号:</span></td><td>0</td></tr>
                                            <tr><td><span class="node"><i></i>项目编号:</span></td><td>0</td></tr>
                                            <tr><td><span class="node"><i></i>设计担当:</span></td><td>0</td></tr>
                                            <tr><td><span class="node"><i></i>入子层名:</span></td><td></td></tr>
                                            <tr><td><span class="node"><i></i>余量警告:</span></td><td>8</td></tr>
                                            <tr><td><span class="node"><i></i>不出料单:</span></td><td>已备料;自找料</td></tr>
                                            <tr><td><span class="node"><i></i>常用余量:</span></td><td>0.5;1.0;1.5;2.0</td></tr>
                                        </tbody>
                                    </table>
                                    <div class="vscroll tall"><i></i></div>
                                </div>
                                <div class="hscroll inset"><i class="tiny"></i></div>
                            </div>

                            <fieldset class="output">
                                <h4>输出:<button class="chev" aria-label="收起"></button></h4>
                                <div class="pairs">
                                    <label><input type="checkbox" checked>识别相同件</label>
                                    <label><input type="checkbox">通透未选中</label>
                                    <label><input type="checkbox" checked>高亮选中</label>
                                    <label><input type="checkbox">高亮已备料</label>
                                    <label><input type="checkbox" checked>隐藏非钢料</label>
                                    <button>反转显示</button>
                                    <button>显示编号</button>
                                    <button>显示球标</button>
                                    <button>导出Text</button>
                                    <button>导出Excel</button>
                                    <button>刷新顺序</button>
                                    <label><input type="checkbox">手选顺序</label>
                                </div>
                            </fieldset>

                            <fieldset class="actions">
                                <h4>操作:<button class="chev" aria-label="收起"></button></h4>
                                <button>识别可见实体模板</button>
                                <button>清除可见实体属性</button>
                                <div class="pickrow active"><span>查找对象 (0)</span><button aria-label="查找对象"><svg width="20" height="20"><circle cx="10" cy="10" r="6" fill="none" stroke="#c22a12" stroke-width="2"/><path d="M10 0v20M0 10h20" stroke="#333"/></svg></button></div>
                                <div class="pickrow off"><span>指定方位</span><button disabled aria-label="指定方位"><svg width="24" height="24" fill="none" stroke="#aaa"><path d="M4 16V3M2 5l2-3 2 3M4 16l12-6M13 9l4 1-3 3M4 16l10 5M11 18l4 3-4 1"/><text x="7" y="8">Z</text><text x="18" y="12">Y</text><text x="17" y="23">X</text></svg></button></div>
                                <div class="pickrow"><span>选定模板 (0)</span><button aria-label="选定模板"><svg width="24" height="24" stroke="#c40" stroke-linejoin="round"><path d="M12 1l10 5-10 6L2 6z" fill="#ffc52e"/><path d="M2 6l10 6v11L2 18z" fill="#ffb000"/><path d="M22 6l-10 6v11l10-6z" fill="#ff8a14"/></svg></button></div>
                            </fieldset>
                        </div>
                    </div>

                    <div class="panel config">
                        <h3>配置:<button class="chev down" aria-label="展开"></button></h3>
                    </div>

                    <div class="divider"></div>
                    <footer>
                        <button class="primary">确定</button>
                        <button>应用</button>
                        <button>取消</button>
                    </footer>
                </section>
            </div>
        </main>

        <aside class="sidebar">
            <button class="drop song">料带</button>
            <button class="drop stack">冲床<span>UP</span></button>
            <button class="drop stack">标件<span>UP</span></button>
            <button class="drop stack">假体<span>UP</span></button>
            <button class="drop">U1</button>
            <button class="drop">U2</button>
            <button class="drop">UP</button>
            <button class="drop">UB</button>
            <button class="drop">PH</button>
            <button class="drop sans">PU</button>
            <button class="drop three">PPS</button>
            <button class="drop">PS</button>
            <button class="drop three">DIE</button>
            <button class="drop">GU</button>
            <button class="drop">LB</button>
            <button class="drop">LP</button>
            <button class="drop">B2</button>
            <button class="drop">B1</button>
            <button class="drop ring">O</button>
            <button class="drop four">TEMP</button>
            <button class="hollow">全</button>
            <button class="hollow">上</button>
            <button class="hollow">下</button>
            <button class="hollow">中</button>
            <button class="hollow">关</button>
            <button class="stack centre">导图<br>层</button>
            <button class="drop sans">PG</button>
            <button class="back" aria-label="收起"></button>
        </aside>
    </div>

    <div class="statusbar">
        <button aria-label="完成"><svg width="16" height="16"><path d="M0 0h16v16H0z" fill="#ddd"/><path d="M3 14L2 3l4 4M8 14L5 6l9-3v6L8 12M8 5v6M11 4v6" fill="none" stroke="#999"/></svg></button>
        <button aria-label="全屏"><svg width="16" height="16" fill="none" stroke="#555"><path d="M1 4V1h3M12 1h3v3M15 12v3h-3M4 15H1v-3"/><path d="M4 4h8v8H4z" fill="#9cc3f0" stroke="#246"/><path d="M4 5h8" stroke="#246" stroke-width="2"/></svg></button>
    </div>

    <footer class="taskbar">
        <button><i class="folder"></i></button>
        <button><i class="yellow"></i></button>
        <button><i class="yellow"></i></button>
        <button><i class="doc"></i></button>
        <button><i class="crimson"></i></button>
        <button><i class="crimson"></i></button>
        <button><i class="nx"></i></button>
        <button><i class="grey"></i></button>
        <button><i class="sky"></i></button>
        <button><i class="disc"></i></button>
        <time>上午 9:12</time>
        <button class="desk" aria-label="显示桌面"></button>
    </footer>

</body>
</html>
```
FILE: styles.css
```
*,
*::before,
*::after {
    box-sizing: border-box;
}

body {
    margin: 0;
    height: 100vh;
    overflow: hidden;
    display: flex;
    flex-direction: column;
    background: #fff;
    color: #222;
    font-family: "Open Sans", "Noto Sans CJK SC", sans-serif;
    font-size: 12px;
}

button {
    font: inherit;
    color: inherit;
    padding: 0;
    border: 0;
    background: none;
}

h1, h2, h3, h4 {
    margin: 0;
    font-weight: normal;
}

em, i {
    font-style: normal;
}

.sprite {
    position: absolute;
}

/* title bar */
.titlebar {
    flex: none;
    height: 26px;
    display: flex;
    align-items: center;
    justify-content: flex-end;
    gap: 11px;
    padding-right: 7px;
}

.titlebar .peek {
    position: absolute;
    top: 0;
    left: 991px;
    width: 284px;
    height: 1px;
    box-shadow: 0 0 3px 1px #777;
}

.titlebar strong {
    color: #099;
    font-size: 13px;
    font-weight: 800;
    margin-right: 15px;
}

.titlebar button {
    width: 12px;
    height: 12px;
}

.titlebar svg {
    display: block;
    fill: none;
    stroke: #444;
}

/* menu */
.menubar {
    flex: none;
    height: 27px;
    display: flex;
    align-items: center;
    gap: 14px;
    padding-bottom: 2px;
    background: #549fb8;
    font: 11px/16px Roboto, "Noto Sans CJK SC", sans-serif;
}

.menubar a {
    height: 16px;
    color: #12242b;
    text-decoration: none;
    white-space: nowrap;
}

.menubar .wide {
    margin-right: 4px;
}

/* toolbars */
.toolbar {
    flex: none;
    height: 34px;
    display: flex;
}

.bar {
    flex: none;
    display: flex;
    border-bottom: 1px solid #d4d4d4;
}

.bar.grip {
    border-left: 1px solid #ccc;
}

.bar.last {
    border-right: 1px solid #ccc;
}

.bar.grip::before {
    content: "";
    width: 4px;
    margin: 3px 0 3px 4px;
    border-left: 2px dotted #999;
}

.stub {
    width: 39px;
    justify-content: space-between;
    align-items: center;
}

.shifted {
    margin-left: -9px;
}

.combo {
    position: relative;
    width: 8px;
    height: 21px;
    border: 1px solid #999;
    border-left: 0;
}

.tool {
    position: relative;
    flex: none;
    width: 31px;
    display: flex;
    align-items: center;
    padding-left: 3px;
    color: #999;
}

.tool svg {
    width: 24px;
    height: 24px;
    fill: none;
    stroke: #a2a2a2;
}

.tool.drop {
    width: 43px;
}

.tool.drop::after,
.more::after,
.combo::after,
.sidebar .drop::after {
    content: "";
    position: absolute;
    right: 3px;
    top: 50%;
    border: 3px solid transparent;
    border-top: 4px solid #111;
    border-bottom: 0;
    margin-top: -2px;
}

.stub .combo::after {
    right: -15px;
}

.more {
    position: relative;
    flex: none;
    width: 13px;
    align-self: stretch;
}

.more::after {
    top: 24px;
    right: 5px;
}

.sep {
    flex: none;
    width: 6px;
    margin: 3px 0;
    background: linear-gradient(#ccc, #ccc) center / 1px 100% no-repeat;
}

.f { fill: #ececec; }
.g { fill: #d2d2d2; }
.l { fill: #e8e8e8; stroke: none; }
.d { fill: #c8c8c8; stroke: #444; }

.tool span {
    font-family: "Noto Sans CJK SC", sans-serif;
    font-size: 12px;
    line-height: 13px;
    width: 24px;
    text-align: center;
    white-space: nowrap;
    font-weight: 500;
}

.tool small {
    font-size: 10px;
    color: #888;
}

.tool small.faint {
    color: #ccc;
}

.tool small.tiny {
    font-size: 9px;
}

.tool .pale { color: #bbb; }
.tool .pale em { color: #ddd; }
.tool .ink { color: #333; font-weight: 700; background: #f0f0f0; }
.red { color: #f33; }
.green { color: #3a5; }
.purple { color: #84a; }
.pink { color: #fbb; }
.violet { color: #88c; }
.blue { color: #59d; }
.ink em { font-weight: 500; }
.tool .box { background: #e8e8e8; }
.tool .black, .tool .black small { color: #333; }

.tool .mv {
    font: bold 14px/13px "Liberation Serif", serif;
}

/* caption laid over a tool icon */
.tool.over small {
    position: absolute;
    left: 13px;
    bottom: 3px;
    font-size: 12px;
    line-height: 13px;
    background: #fff;
}

.tool.name small {
    left: 15px;
    bottom: 5px;
    font-size: 10px;
    line-height: 10px;
}

.tool.top small {
    left: 9px;
    top: 6px;
    bottom: auto;
    font: 8px/10px "Liberation Mono", monospace;
    background: none;
}

.tool.percent small {
    left: 6px;
    top: 12px;
    bottom: auto;
    font: italic 9px/10px "Liberation Sans", sans-serif;
    background: none;
}

.tool.zk small {
    left: 9px;
    top: 7px;
    bottom: auto;
    font: 11px/11px "Liberation Sans", sans-serif;
    background: none;
}

.tool.zk small:last-child {
    left: 20px;
    top: 18px;
}

.tool.keys small {
    left: 3px;
    bottom: 3px;
    width: 24px;
    text-align: center;
    font: 12px/12px "Noto Sans", sans-serif;
}

.tool.auto small {
    left: 2px;
    bottom: 3px;
    color: #33c;
    background: none;
}

.toolbar.small {
    height: 32px;
    border-bottom: 1px solid #888;
}

.small .combo {
    align-self: center;
    width: 42px;
    margin-right: 4px;
}

.small .combo::after {
    right: 6px;
    border-width: 5px 4px 0;
}

.small .sep {
    width: 5px;
}

.small .tool {
    width: 23px;
}

.small .tool.drop {
    width: 35px;
}

.small .tool.code {
    padding-left: 1px;
}

.small .tool svg {
    width: 16px;
    height: 16px;
}

.toolbar .code span {
    position: relative;
    font: 13px/14px "Liberation Serif", serif;
    width: 18px;
    height: 24px;
}

.toolbar .code.long span {
    font-size: 11px;
    width: 20px;
}

.toolbar .code small {
    position: absolute;
    right: 0;
    bottom: 1px;
    font: 7px/9px "Noto Sans CJK SC", sans-serif;
    color: #aaa;
}

.more.end {
    margin-left: auto;
}

/* workspace */
.workspace {
    flex: 1;
    min-height: 0;
    display: flex;
    border-bottom: 1px solid #999;
}

.resource {
    flex: none;
    width: 18px;
    padding-top: 28px;
    overflow: hidden;
    display: flex;
    flex-direction: column;
}

.resource .pane {
    flex: 1;
    width: 9px;
    background: #f3f3f3;
    border: 1px solid #ccc;
    border-left: 0;
    border-bottom: 4px solid #bbb;
    display: flex;
    flex-direction: column;
    align-items: flex-start;
}

.resource .thumb {
    width: 5px;
    height: 252px;
    margin-top: 51px;
    border: 1px solid #999;
    border-left: 0;
    border-radius: 0 2px 2px 0;
    background: #ddd;
}

.resource .fold {
    height: 24px;
    width: 8px;
    border-bottom: 2px solid #ccc;
    background: linear-gradient(#1b7085, #1b7085) 0 8px / 2px 5px no-repeat;
}

.resource .fold:last-child {
    margin-bottom: 4px;
}

main {
    flex: 1;
    min-width: 0;
    display: flex;
    flex-direction: column;
}

.tabs {
    flex: none;
    height: 23px;
    display: flex;
    border-bottom: 2px solid #549fb8;
}

.tab {
    display: flex;
    align-items: center;
    gap: 5px;
    padding: 0 5px;
    background: #549fb8;
    color: #fff;
    line-height: 20px;
    white-space: nowrap;
}

.viewport {
    flex: 1;
    position: relative;
    border-left: 1px solid #888;
    background: linear-gradient(#b4b5b6, #c7c9cb 28%, #dcdee0 50%, #e6e8ea 72%, #e6e8ea);
}

.viewport h1 {
    padding-left: 31px;
    color: #f00;
    font: 300 69px/78px "Noto Sans CJK SC", sans-serif;
    white-space: nowrap;
}

.viewport h1 span {
    font-family: "Liberation Mono", monospace;
    font-size: 58px;
    font-weight: 400;
}

.model {
    position: absolute;
    right: 61px;
    bottom: 0;
    width: 740px;
    height: 641px;
}

.edges {
    stroke: #322;
    stroke-width: 1;
    stroke-linejoin: round;
}

/* dialog window */
.dialog {
    position: absolute;
    left: 21px;
    top: 85px;
    width: 784px;
    padding: 0 5px 10px;
    background: #efefef;
    border: 1px solid #d4d6d8;
    border-top: 0;
}

.dialog > header {
    display: flex;
    align-items: center;
    gap: 7px;
    height: 24px;
    margin: 0 -6px 4px;
    padding: 0 9px 0 6px;
    background: #549fb8;
    color: #fff;
}

.dialog h2 {
    flex: 1;
    font-size: 14px;
}

.dialog header svg {
    display: block;
}

.panel {
    background: #fff;
    padding: 0 9px 8px;
    border-bottom: 1px solid #c8c8c8;
    margin-bottom: 3px;
}

.panel h3,
.panel h4 {
    display: flex;
    align-items: center;
    justify-content: space-between;
    color: #0b5e74;
    white-space: nowrap;
}

.panel h3 {
    height: 30px;
    font-size: 14px;
    margin-left: -2px;
    padding-bottom: 6px;
}

.options h3 {
    height: 31px;
}

.chev {
    width: 11px;
    height: 11px;
    margin-right: -3px;
    background: url("data:image/svg+xml,%3Csvg xmlns='http://www.w3.org/2000/svg' width='11' height='11'%3E%3Cpath d='M1 9l4-7 5 7' fill='none' stroke='%230b6478' stroke-width='2'/%3E%3C/svg%3E") center no-repeat;
}

.chev.down {
    transform: rotate(180deg);
}

.list {
    border: 2px solid #e0e0e0;
}

table {
    width: 100%;
    table-layout: fixed;
    border-collapse: separate;
    border-spacing: 0;
}

th,
td {
    height: 20px;
    line-height: 19px;
    padding: 0 0 0 4px;
    border-right: 1px solid #e2ecec;
    border-bottom: 1px solid #e6ecec;
    white-space: nowrap;
    overflow: hidden;
}

th {
    height: 21px;
    padding-left: 6px;
    background: #efefef;
    border-color: #d8d8d8;
    font-weight: normal;
    text-align: left;
}

tr:nth-child(even) td {
    background: #fafafa;
}

.w85 { width: 85px; }
.w65 { width: 65px; }
.w70 { width: 70px; }
.w40 { width: 40px; }

.bom tbody {
    color: #d40a12;
}

.bom .blank td {
    height: 15px;
    border-bottom: 0;
}

td:first-child {
    padding: 0;
}

.node {
    position: relative;
    display: flex;
    align-items: center;
    height: 19px;
}

.node i {
    flex: none;
    width: 21px;
    height: 20px;
    background: repeating-linear-gradient(#999 0 1px, transparent 1px 2px) 9px 0 / 1px 100% no-repeat,
        repeating-linear-gradient(90deg, #999 0 1px, transparent 1px 2px) 9px 10px / 10px 1px no-repeat;
}

tr:first-child .node i {
    background-position: 9px 10px;
}

.plus::before {
    content: "";
    position: absolute;
    left: 5px;
    top: 5px;
    width: 9px;
    height: 9px;
    border: 1px solid #ddd;
    background: linear-gradient(#222, #222) center / 5px 1px no-repeat,
        linear-gradient(#222, #222) center / 1px 5px no-repeat, #fff;
}

.node input {
    appearance: none;
    flex: none;
    width: 12px;
    height: 12px;
    margin: 0 5px 0 0;
    border: 1px solid #111;
    background: #fff;
}

.node input:checked {
    background: #fff url("data:image/svg+xml,%3Csvg xmlns='http://www.w3.org/2000/svg' width='10' height='10'%3E%3Cpath d='M1 5l3 3 5-7' fill='none' stroke='%23d8101c' stroke-width='3'/%3E%3C/svg%3E") center no-repeat;
}

/* scrollbars */
.hscroll,
.vscroll {
    position: relative;
    display: flex;
    background: #ececec;
}

.hscroll {
    height: 15px;
    padding: 0 18px;
}

.hscroll.inset {
    margin-right: 16px;
    box-shadow: 16px 0 #ececec;
}

.hscroll i,
.vscroll i {
    border: 1px solid #999;
    border-radius: 2px;
}

.hscroll i {
    width: 121px;
    background: repeating-linear-gradient(90deg, #666 0 1px, transparent 1px 3px) center / 7px 6px no-repeat,
        linear-gradient(#f2f2f4, #c8c8ce);
}

.hscroll i.long { width: 519px; }
.hscroll i.tiny { width: 76px; }

.hscroll::before,
.hscroll::after,
.vscroll::before,
.vscroll::after {
    content: "";
    position: absolute;
    border: 3px solid transparent;
}

.hscroll::before { left: 5px; top: 5px; border-right: 4px solid #444; border-left: 0; }
.hscroll::after { right: 6px; top: 5px; border-left: 4px solid #444; border-right: 0; }
.vscroll::before { top: 8px; left: 5px; border-bottom: 4px solid #444; border-top: 0; }
.vscroll::after { bottom: 8px; left: 5px; border-top: 4px solid #444; border-bottom: 0; }

.vscroll {
    flex: none;
    width: 15px;
    flex-direction: column;
    padding-top: 18px;
}

.vscroll i {
    height: 85px;
    background: repeating-linear-gradient(#666 0 1px, transparent 1px 3px) center / 6px 7px no-repeat,
        linear-gradient(90deg, #f2f2f4, #c8c8ce);
}

.vscroll.tall i {
    height: 94px;
}

/* options section */
.columns {
    display: flex;
    align-items: flex-start;
    gap: 5px;
}

.short {
    width: 199px;
    border-width: 1px;
    padding: 1px;
    background: #efefef;
}

.scroller {
    display: flex;
    height: 159px;
    overflow: hidden;
    background: #fff;
}

.scroller table {
    flex: 1;
    width: auto;
}

.layers th:first-child,
.layers td:first-child {
    width: 78px;
}

.props th:first-child,
.props td:first-child {
    width: 101px;
}

.short td:last-child,
.short th:last-child {
    border-right: 0;
}

.sorted::after {
    content: "";
    display: inline-block;
    margin: 0 0 2px 18px;
    border: 5px solid transparent;
    border-bottom-color: #111;
    border-top: 0;
}

fieldset {
    margin: 0;
    min-width: 0;
    padding: 0 8px 8px;
    border: 1px solid #dcdcdc;
    background: #efefef;
}

.panel h4 {
    height: 29px;
    padding-bottom: 8px;
}

.panel h4 .chev {
    margin-right: -2px;
}

.output {
    width: 181px;
}

.actions {
    width: 140px;
}

.pairs {
    display: grid;
    grid-template-columns: 80px 80px;
    grid-template-rows: 21px 21px;
    gap: 4px;
}

.pairs label {
    display: flex;
    align-items: center;
    height: 21px;
    white-space: nowrap;
}

.pairs input {
    appearance: none;
    flex: none;
    width: 13px;
    height: 13px;
    margin: 0 5px 0 0;
    border: 1px solid #8a8d90;
    background: linear-gradient(135deg, #c9ced3, #fff) content-box, #f4f4f4;
    padding: 1px;
}

.pairs input:checked {
    background: url("data:image/svg+xml,%3Csvg xmlns='http://www.w3.org/2000/svg' width='11' height='11'%3E%3Cpath d='M2 5l3 4 4-8' fill='none' stroke='%23334f94' stroke-width='2'/%3E%3C/svg%3E") center no-repeat, #eef1f5;
}

.pairs button,
.actions > button {
    height: 29px;
    border: 1px solid #a6a6a6;
    background: #f1f1f1;
}

.actions > button {
    display: block;
    width: 100%;
    margin-bottom: 2px;
}

.pickrow {
    display: flex;
    gap: 2px;
    height: 32px;
    margin-bottom: 2px;
}

.pickrow:last-child {
    margin-bottom: 0;
}

.pickrow span {
    flex: 1;
    line-height: 32px;
    white-space: nowrap;
}

.pickrow button {
    width: 32px;
    border: 1px solid #a6a6a6;
    display: flex;
    align-items: center;
    justify-content: center;
}

.pickrow text {
    font: 8px "Liberation Sans", sans-serif;
    fill: #aaa;
    stroke: none;
}

.pickrow.active span,
.pickrow.active button {
    background: #ffe078;
    border: 0;
}

.pickrow.off {
    color: #aaa;
}

.pickrow.off button {
    border-color: #d0d0d0;
}

.config {
    padding-bottom: 0;
    margin-bottom: 0;
}

.config h3 {
    height: 24px;
    padding-bottom: 0;
}

.divider {
    height: 17px;
    border-bottom: 1px solid #d0d0d0;
    display: flex;
    justify-content: center;
    align-items: center;
}

.divider::after {
    content: "";
    border: 5px solid transparent;
    border-top-color: #111;
    border-bottom: 0;
}

.dialog footer {
    display: flex;
    justify-content: flex-end;
    gap: 5px;
    padding: 7px 10px 0;
}

.dialog footer button {
    width: 54px;
    height: 25px;
    border: 1px solid #a4a4a4;
    background: #dcdcdc;
}

.dialog footer .primary {
    background: #74b2c8;
    border-color: #74b2c8;
    color: #fff;
}

/* right tool column */
.sidebar {
    flex: none;
    width: 45px;
    padding-top: 11px;
    display: flex;
    flex-direction: column;
}

.sidebar::before {
    content: "";
    margin: -4px 4px 1px 3px;
    border-top: 2px dotted #999;
}

.sidebar button {
    position: relative;
    flex: none;
    height: 31px;
    padding: 0 15px 0 3px;
    text-align: center;
    color: #a6a6a6;
    font: bold 20px/31px "Liberation Serif", serif;
    white-space: nowrap;
}

.sidebar .drop::after {
    right: 4px;
}

.sidebar .song {
    font: 500 12px/31px "Noto Sans CJK SC", sans-serif;
}

.sidebar .stack {
    font: 500 12px/13px "Noto Sans CJK SC", sans-serif;
}

.sidebar .stack span {
    display: block;
    margin: 0 2px;
    font: 14px/15px "Liberation Sans", sans-serif;
    background: #ececec;
}

.sidebar .sans {
    font: 18px/31px "Liberation Sans", sans-serif;
}

.sidebar .three {
    font-size: 13px;
}

.sidebar .four {
    font-size: 9px;
}

.sidebar .hollow,
.sidebar .centre {
    padding: 0 6px 0 8px;
}

.sidebar .hollow {
    font: 900 22px/31px "Noto Sans CJK SC", sans-serif;
    color: #e4e4e4;
    -webkit-text-stroke: 1px #999;
}

.sidebar .ring {
    color: #f0f0f0;
    font-size: 27px;
    -webkit-text-stroke: 1px #999;
}

.sidebar .back {
    height: 14px;
    border-bottom: 1px solid #ccc;
}

.sidebar .back::after {
    content: "";
    position: absolute;
    left: 7px;
    top: 4px;
    border: 3px solid transparent;
    border-right: 4px solid #111;
    border-left: 0;
}

/* bottom */
.statusbar {
    flex: none;
    height: 22px;
    display: flex;
    align-items: center;
    justify-content: flex-end;
    gap: 4px;
    padding-right: 54px;
}

.statusbar svg {
    display: block;
}

.taskbar {
    flex: none;
    height: 8px;
    overflow: hidden;
    display: flex;
    gap: 2px;
    padding-left: 2px;
    border-top: 1px solid #223;
    background: linear-gradient(90deg, #5f93b8, #6ba5c4 80%, #4b7f92);
}

.taskbar button {
    width: 60px;
    height: 30px;
    display: flex;
    justify-content: center;
    padding-top: 3px;
    border: 1px solid #24384c;
    border-radius: 2px;
    background: linear-gradient(90deg, #8fb3d8, #c9dff0 50%, #8fb0cf);
}

.taskbar i {
    width: 28px;
    height: 20px;
    border-radius: 4px 4px 0 0;
}

.taskbar .folder { background: #fdb813; }
.taskbar .yellow { width: 12px; border-radius: 6px; background: #ee3; border: 1px solid #222; }
.taskbar .doc { width: 20px; background: #e8f2fb; border: 1px solid #468; }
.taskbar .crimson { width: 14px; background: #c8283c; }
.taskbar .nx { background: #167f80; border: 1px solid #fff; }
.taskbar .grey { width: 14px; border-radius: 7px; background: #778; }
.taskbar .sky { background: #12b0f5; }
.taskbar .disc { width: 20px; border-radius: 10px; background: #555; }

.taskbar time {
    margin-left: auto;
    color: #fff;
    line-height: 16px;
    white-space: nowrap;
}

.taskbar .desk {
    width: 15px;
    margin-left: 33px;
    background: #8ab;
}
```
